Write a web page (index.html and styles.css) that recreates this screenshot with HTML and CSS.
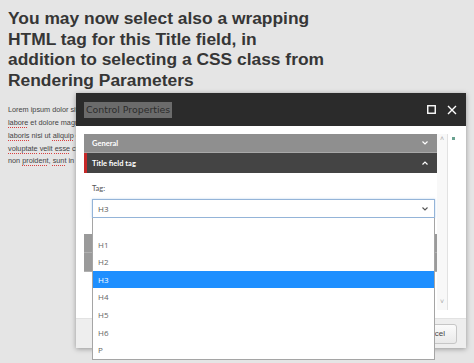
FILE: index.html
```html
<!DOCTYPE html>
<html lang="en">
<head>
    <meta charset="UTF-8">
    <meta name="viewport" content="width=device-width, initial-scale=1.0">
    <title>Title field tag</title>
    <link rel="stylesheet" href="styles.css">
</head>
<body>
    <h1 class="intro-title">You may now select also a wrapping<br>HTML tag for this Title field, in<br>addition to selecting a CSS class from<br>Rendering Parameters</h1>

    <p class="lorem">
        Lorem ipsum dolor sit amet, consectetur adipiscing elit, sed do eiusmod tempor<br>
        <span class="typo">labore</span> et dolore magna aliqua. Ut enim ad minim veniam, quis<br>
        <span class="typo">laboris</span> nisi ut <span class="typo">aliquip</span> ex ea commodo consequat. Duis aute<br>
        <span class="typo">voluptate</span> <span class="typo">velit</span> <span class="typo">esse</span> cillum dolore eu fugiat nulla<br>
        non <span class="typo">proident</span>, <span class="typo">sunt</span> in culpa qui officia deserunt mollit
    </p>

    <!-- Control Properties dialog (modal overlay) -->
    <div class="dialog">
        <div class="dialog-header">
            <span class="dialog-title">Control Properties</span>
            <div class="header-actions">
                <svg width="9" height="9" viewBox="0 0 9 9"><rect x="0.75" y="0.75" width="7.5" height="7.5" fill="none" stroke="#fff" stroke-width="1.4"/></svg>
                <svg width="10" height="10" viewBox="0 0 10 10"><path d="M1 1 L9 9 M9 1 L1 9" stroke="#fff" stroke-width="1.4"/></svg>
            </div>
        </div>

        <div class="dialog-body">
            <div class="pane">
                <div class="pane-content">
                    <div class="section-bar bar-collapsed">
                        <span>General</span>
                        <svg class="chevron" width="6" height="4" viewBox="0 0 6 4"><path d="M0.5 0.5 L3 3 L5.5 0.5" fill="none" stroke="#fff" stroke-width="1.2"/></svg>
                    </div>
                    <div class="section-bar bar-open">
                        <span>Title field tag</span>
                        <svg class="chevron" width="6" height="4" viewBox="0 0 6 4"><path d="M0.5 3.5 L3 1 L5.5 3.5" fill="none" stroke="#fff" stroke-width="1.2"/></svg>
                    </div>

                    <div class="section-fields">
                        <div class="field-label">Tag:</div>
                        <div class="select-wrap">
                            <div class="select-box">
                                <span>H3</span>
                                <svg width="6" height="4" viewBox="0 0 6 4"><path d="M0.5 0.5 L3 3 L5.5 0.5" fill="none" stroke="#555" stroke-width="1.1"/></svg>
                            </div>
                            <ul class="select-list">
                                <li></li>
                                <li>H1</li>
                                <li>H2</li>
                                <li class="selected">H3</li>
                                <li>H4</li>
                                <li>H5</li>
                                <li>H6</li>
                                <li>P</li>
                            </ul>
                        </div>
                    </div>

                    <div class="section-bar bar-plain"></div>
                    <div class="section-bar bar-plain"></div>
                </div>
                <div class="scrollbar">
                    <span class="scroll-arrow">&#708;</span>
                    <span class="scroll-arrow">&#709;</span>
                </div>
            </div>
            <div class="side">
                <div class="side-dot"></div>
            </div>
        </div>

        <div class="dialog-footer">
            <button class="btn">OK</button>
            <button class="btn">Cancel</button>
        </div>
    </div>
</body>
</html>
```

FILE: styles.css
```css
/* Page */
body {
    margin: 0;
    padding: 8px;
    background-color: #e5e5e5;
    font-family: "Liberation Sans", Arial, sans-serif;
    color: #333;
}

.intro-title {
    margin: 0;
    font-size: 17.4px;
    line-height: 20.7px;
    font-weight: bold;
    color: #363636;
}

.lorem {
    margin: 13px 0 0;
    font-size: 7.3px;
    line-height: 12.9px;
    color: #444;
    white-space: nowrap;
}

.typo {
    text-decoration: underline dotted #d84040;
    text-decoration-thickness: 1px;
    text-underline-offset: 1.5px;
}

/* Dialog */
.dialog {
    position: absolute;
    left: 76px;
    top: 93px;
    width: 390px;
    box-shadow: 0 1px 5px rgba(0, 0, 0, 0.35);
}

.dialog-header {
    height: 33px;
    background-color: #2b2b2b;
    display: flex;
    align-items: center;
    padding: 0 9px 0 8px;
}

.dialog-title {
    font-family: "DejaVu Sans", sans-serif;
    font-size: 9.4px;
    line-height: 10px;
    padding: 3px 2px;
    color: #2c2c2c;
    background-color: #6b6b6b;
}

.header-actions {
    margin-left: auto;
    display: flex;
    align-items: center;
    gap: 11px;
}

.header-actions svg {
    display: block;
}

.dialog-body {
    height: 192px;
    box-sizing: border-box;
    background-color: #fff;
    display: flex;
    padding: 8px 0 0 8px;
}

.pane {
    height: 176px;
    display: flex;
    border-right: 1px solid #e2e2e2;
}

.pane-content {
    width: 353px;
}

.scrollbar {
    width: 10px;
    background-color: #f8f8f8;
    display: flex;
    flex-direction: column;
    justify-content: space-between;
    align-items: center;
    padding: 1px 0 4px;
    box-sizing: border-box;
}

.scroll-arrow {
    font-size: 7px;
    line-height: 8px;
    color: #aaa;
}

.side {
    flex: 1;
    padding: 3px 0 0 4px;
}

.side-dot {
    width: 3px;
    height: 3px;
    background-color: #6aa290;
}

/* Accordion bars */
.section-bar {
    height: 19px;
    box-sizing: border-box;
    display: flex;
    align-items: center;
    justify-content: space-between;
    padding: 0 9px 0 8px;
    font-family: Lato, sans-serif;
    font-weight: bold;
    font-size: 7.5px;
    color: #fff;
}

.bar-collapsed {
    background-color: #8f8f8f;
    border-bottom: 1px solid #a8a8a8;
    height: 19px;
}

.bar-open {
    height: 20px;
    background-color: #444;
    border-left: 3px solid #c62828;
    padding-left: 5px;
}

.bar-plain {
    background-color: #9a9a9a;
    border-bottom: 1px solid #b0b0b0;
}

.section-fields {
    padding: 10px 2px 16px 8px;
}

.field-label {
    font-family: Lato, sans-serif;
    font-size: 7.5px;
    line-height: 12px;
    color: #555;
    margin-bottom: 4px;
}

/* Select with its open list */
.select-wrap {
    position: relative;
}

.select-box {
    height: 19px;
    box-sizing: border-box;
    border: 1px solid #94b4d8;
    box-shadow: 0 0 2px rgba(120, 170, 220, 0.5);
    display: flex;
    align-items: center;
    justify-content: space-between;
    padding: 0 6px 0 5px;
    font-family: "Open Sans", sans-serif;
    font-size: 8px;
    color: #555;
}

.select-list {
    position: absolute;
    top: 100%;
    left: 0;
    right: 0;
    margin: 0;
    padding: 0;
    list-style: none;
    background-color: #fff;
    border: 1px solid #a5a5a5;
    border-top: none;
    font-family: "Open Sans", sans-serif;
    font-size: 8px;
    color: #666;
    z-index: 2;
}

.select-list li {
    height: 17.6px;
    line-height: 17.6px;
    padding-left: 5px;
}

.select-list .selected {
    background-color: #1e8fff;
    color: #fff;
}

/* Footer */
.dialog-footer {
    height: 30px;
    box-sizing: border-box;
    background-color: #eeeeee;
    border-top: 1px solid #e2e2e2;
    display: flex;
    justify-content: flex-end;
    align-items: center;
    gap: 6px;
    padding-right: 9px;
}

.btn {
    height: 20px;
    padding: 0 11px;
    font-family: "Liberation Sans", Arial, sans-serif;
    font-size: 8px;
    color: #444;
    border: 1px solid #c6c6c6;
    border-radius: 3px;
    background: linear-gradient(#fbfbfb, #e9e9e9);
}
```
